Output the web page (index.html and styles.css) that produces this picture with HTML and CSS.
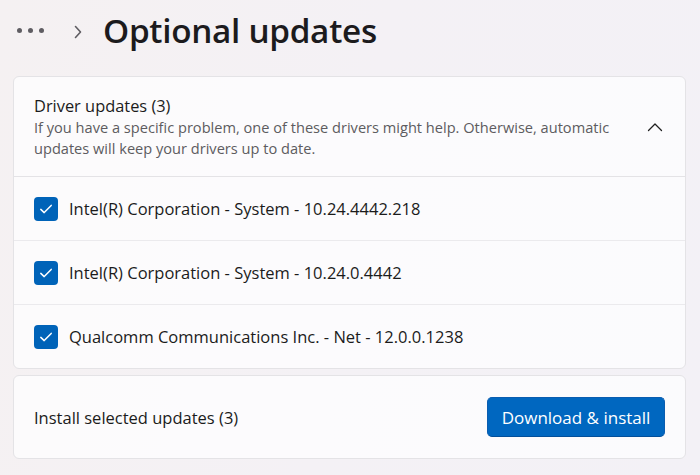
FILE: index.html
```html
<!DOCTYPE html>
<html>
<head>
<meta charset="utf-8">
<link rel="stylesheet" href="styles.css">
</head>
<body>
<div class="page">
  <div class="crumbs">
    <span class="dots"><i></i><i></i><i></i></span>
    <svg class="crumb-chev" width="10" height="14" viewBox="0 0 10 14"><path d="M2.5 1.5 L7.5 7 L2.5 12.5" fill="none" stroke="#5f5d62" stroke-width="1.6" stroke-linecap="round" stroke-linejoin="round"/></svg>
    <h1 class="title">Optional updates</h1>
  </div>

  <div class="card">
    <div class="card-head">
      <div class="head-text">
        <div class="head-title">Driver updates (3)</div>
        <div class="head-sub">If you have a specific problem, one of these drivers might help. Otherwise, automatic updates will keep your drivers up to date.</div>
      </div>
      <svg class="up-chev" width="16" height="10" viewBox="0 0 16 10"><path d="M1.5 8.5 L8 2 L14.5 8.5" fill="none" stroke="#1f1f1f" stroke-width="1.3" stroke-linecap="round" stroke-linejoin="round"/></svg>
    </div>
    <div class="row">
      <span class="check"><svg width="14" height="12" viewBox="0 0 14 12"><path d="M1.8 6.4 L5.2 9.6 L12.2 2.4" fill="none" stroke="#fff" stroke-width="1.5" stroke-linecap="round" stroke-linejoin="round"/></svg></span>
      <span class="row-text">Intel(R) Corporation - System - 10.24.4442.218</span>
    </div>
    <div class="row">
      <span class="check"><svg width="14" height="12" viewBox="0 0 14 12"><path d="M1.8 6.4 L5.2 9.6 L12.2 2.4" fill="none" stroke="#fff" stroke-width="1.5" stroke-linecap="round" stroke-linejoin="round"/></svg></span>
      <span class="row-text">Intel(R) Corporation - System - 10.24.0.4442</span>
    </div>
    <div class="row">
      <span class="check"><svg width="14" height="12" viewBox="0 0 14 12"><path d="M1.8 6.4 L5.2 9.6 L12.2 2.4" fill="none" stroke="#fff" stroke-width="1.5" stroke-linecap="round" stroke-linejoin="round"/></svg></span>
      <span class="row-text">Qualcomm Communications Inc. - Net - 12.0.0.1238</span>
    </div>
  </div>

  <div class="card install">
    <span class="install-text">Install selected updates (3)</span>
    <button class="btn">Download &amp; install</button>
  </div>
</div>
</body>
</html>
```

FILE: styles.css
```css
html, body {
  margin: 0;
  padding: 0;
}
body {
  width: 700px;
  height: 475px;
  overflow: hidden;
  background: linear-gradient(100deg, #f5f1f2 0%, #f4f1f5 50%, #f3f1f6 100%);
  font-family: "Open Sans", "Noto Sans", sans-serif;
  color: #1b1b1b;
}
.page {
  padding: 0 14px 0 13px;
}
.crumbs {
  display: flex;
  align-items: center;
  height: 60px;
  padding-left: 4px;
}
.dots {
  display: flex;
  gap: 6px;
  margin-right: 29px;
  margin-top: 1px;
}
.dots i {
  width: 5px;
  height: 5px;
  border-radius: 50%;
  background: #5f5d62;
}
.crumb-chev {
  margin-right: 20px;
  margin-top: 3px;
}
.title {
  margin: 0;
  font-size: 33.3px;
  font-weight: 600;
  letter-spacing: -0.3px;
  line-height: 40px;
  color: #1c1b1d;
}
.card {
  margin-top: 16px;
  background: rgba(252, 252, 253, 0.92);
  border: 1px solid #e4e3e6;
  border-radius: 6px;
}
.card-head {
  display: flex;
  align-items: center;
  height: 99px;
  padding: 0 20px;
  border-bottom: 1px solid #e4e3e6;
}
.head-text {
  flex: 1;
}
.head-title {
  font-size: 16.4px;
  line-height: 22px;
  color: #1b1b1b;
}
.head-sub {
  font-size: 14.6px;
  line-height: 21px;
  color: #5d5c60;
  max-width: 610px;
}
.up-chev {
  margin-right: 2px;
}
.row {
  display: flex;
  align-items: center;
  height: 63px;
  padding-left: 20px;
  border-bottom: 1px solid #ebeaed;
}
.row:last-child {
  border-bottom: none;
}
.check {
  width: 24px;
  height: 24px;
  border-radius: 4px;
  background: #0063b8;
  display: flex;
  align-items: center;
  justify-content: center;
  margin-right: 11px;
}
.row-text {
  font-size: 16.5px;
  color: #1b1b1b;
}
.install {
  margin-top: 6px;
  height: 82px;
  display: flex;
  align-items: center;
  justify-content: space-between;
  padding: 0 20px;
}
.install-text {
  font-size: 16.5px;
  color: #1b1b1b;
}
.btn {
  font-family: inherit;
  font-size: 17px;
  color: #fff;
  background: #0067c0;
  border: 1px solid #0a5db0;
  border-bottom-color: #024f9a;
  border-radius: 5px;
  width: 178px;
  height: 40px;
  padding: 0;
}
```
